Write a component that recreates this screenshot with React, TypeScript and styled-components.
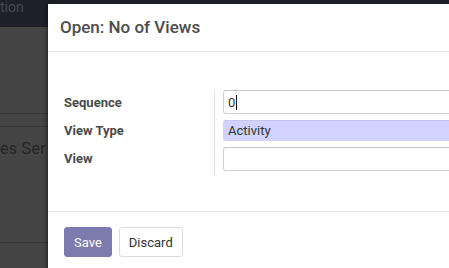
import styled, { createGlobalStyle } from 'styled-components';

const GlobalStyle = createGlobalStyle`
    html, body {
        margin: 0;
        padding: 0;
        width: 449px;
        height: 268px;
        overflow: hidden;
        background: #454545;
        font-family: Roboto, "Liberation Sans", Arial, sans-serif;
    }
`

const Page = styled.div`
    position: relative;
    width: 449px;
    height: 268px;
    overflow: hidden;
    background: #444444;
`

const NavBar = styled.div`
    height: 27px;
    background: #1f1f2a;
    color: #4a4a55;
    font-size: 14px;
    line-height: 15px;
    white-space: nowrap;
`

const Content = styled.div`
    display: flex;
    flex-direction: column;

    .spacer{ height: 86px; }

    .rule{
        height: 1px;
        background: #373737;
    }

    .gap{ height: 12px; }

    .cell{
        height: 115px;
        padding-top: 12px;
        font-size: 16px;
        letter-spacing: 0.3px;
        color: #262626;
        white-space: nowrap;
        box-sizing: border-box;
    }
`

const Modal = styled.div`
    position: absolute;
    left: 48px;
    top: 4px;
    width: 520px;
    height: 300px;
    background: #ffffff;
    box-shadow: -2px 0 3px rgba(0,0,0,0.35);
    display: flex;
    flex-direction: column;
`

const Header = styled.div`
    height: 48px;
    border-bottom: 1px solid #e2e2e2;
    display: flex;
    align-items: center;
    padding-left: 12px;
    padding-bottom: 1px;
    box-sizing: border-box;

    h4{
        margin: 0;
        font-size: 17px;
        font-weight: 500;
        color: #4c4c4c;
    }
`

const Body = styled.div`
    height: 160px;
    padding: 38px 0 0 16px;
    box-sizing: border-box;
    border-bottom: 1px solid #e2e2e2;
    display: flex;
`

const Labels = styled.div`
    width: 150px;
    border-right: 1px solid #e3e3e3;
    height: 86px;
    display: flex;
    flex-direction: column;
`

const Label = styled.div<{ $h: number }>`
    height: ${p => p.$h}px;
    display: flex;
    align-items: center;
    font-size: 13px;
    font-weight: 700;
    color: #4a4a4a;
`

const Fields = styled.div`
    padding-left: 8px;
    display: flex;
    flex-direction: column;
    gap: 6px;
    flex: 1;
`

const Input = styled.div<{ $tinted?: boolean }>`
    height: ${p => p.$tinted ? 21 : 24}px;
    box-sizing: border-box;
    border: 1px solid ${p => p.$tinted ? '#d2d2ff' : '#cfcfcf'};
    border-top-color: ${p => p.$tinted ? '#c4c4ee' : '#c4c4c4'};
    border-radius: 3px 0 0 3px;
    background: ${p => p.$tinted ? '#d2d2ff' : '#ffffff'};
    font-size: 13px;
    color: #333;
    padding-left: 4px;
    display: flex;
    align-items: center;

    .caret{
        width: 1px;
        height: 15px;
        background: #111;
        margin-left: 1px;
    }
`

const Footer = styled.div`
    display: flex;
    gap: 7px;
    padding: 15px 0 0 16px;
`

const Button = styled.button<{ $primary?: boolean }>`
    height: 30px;
    padding: 0 9px;
    border-radius: 3px;
    font-family: inherit;
    font-size: 13px;
    border: 1px solid ${p => p.$primary ? '#7c7bad' : '#dcdcdc'};
    background: ${p => p.$primary ? '#7c7bad' : '#ffffff'};
    color: ${p => p.$primary ? '#ffffff' : '#333333'};
`

export default function App() {
    return (
        <Page>
            <GlobalStyle />
            <NavBar>tion</NavBar>
            <Content>
                <div className='spacer' />
                <div className='rule' />
                <div className='gap' />
                <div className='rule' />
                <div className='cell'>es Ser</div>
                <div className='rule' />
            </Content>

            <Modal>
                <Header>
                    <h4>Open: No of Views</h4>
                </Header>
                <Body>
                    <Labels>
                        <Label $h={24}>Sequence</Label>
                        <Label $h={33}>View Type</Label>
                        <Label $h={22}>View</Label>
                    </Labels>
                    <Fields>
                        <Input>0<span className='caret' /></Input>
                        <Input $tinted>Activity</Input>
                        <Input />
                    </Fields>
                </Body>
                <Footer>
                    <Button $primary>Save</Button>
                    <Button>Discard</Button>
                </Footer>
            </Modal>
        </Page>
    )
}
